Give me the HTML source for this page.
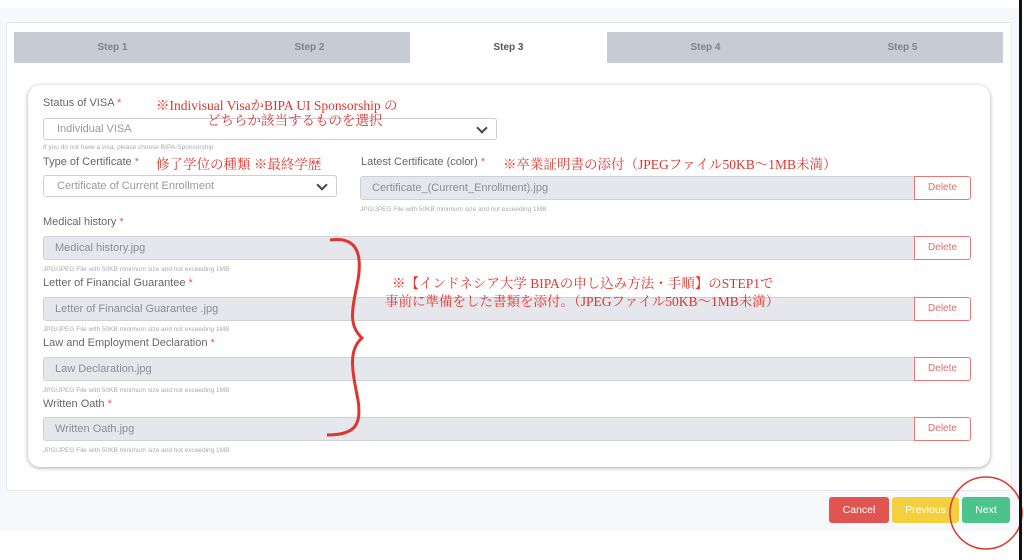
<!DOCTYPE html>
<html><head><meta charset="utf-8"><style>
*{margin:0;padding:0;box-sizing:border-box}
body{width:1024px;height:560px;background:#fff;position:relative;overflow:hidden;font-family:"Liberation Sans",sans-serif;}
.a{position:absolute}
.bg{left:0;top:8px;width:1019px;height:523px;background:#f7f8fb}
.card{left:6px;top:22px;width:1006px;height:469px;background:#fff;border:1px solid #e6e8ec;border-radius:3px}
.steps{left:14px;top:32px;width:989px;height:31px;background:#c6cbd4}
.step{position:absolute;top:0;height:31px;line-height:31px;text-align:center;font-size:10px;font-weight:bold;color:#7d828b;width:197px}
.inner{left:28px;top:85px;width:962px;height:382px;border-radius:12px;background:#fff;box-shadow:0 1px 4px rgba(0,0,0,.35)}
.lbl{font-size:11px;color:#666}
.lbl b{color:#e55;font-weight:normal}
.help{font-size:6.5px;color:#aaa}
.sel{border:1px solid #ccd;border-radius:3px;background:#fff;font-size:11px;color:#999;padding-left:13px;line-height:20px;height:22px}
.sel:after{content:"";position:absolute;right:10px;top:5px;width:6px;height:6px;border-right:2px solid #444;border-bottom:2px solid #444;transform:rotate(45deg)}
.inp{background:#e6e7ec;border:1px solid #cfd1d8;border-radius:3px 0 0 3px;font-size:11px;color:#8a8d95;padding-left:11px;line-height:22px;height:24px}
.del{width:57px;height:24px;border:1px solid #e8777a;border-radius:0 3px 3px 0;background:#fff;color:#e36b6e;font-size:10px;text-align:center;line-height:22px}
.jp{font-family:"Liberation Serif","Noto Serif CJK SC",serif;color:#e0352d;font-size:13.5px;white-space:nowrap}
.btn{top:497px;height:26px;color:#fff;font-size:10.5px;text-align:center;line-height:26px;border-radius:3px}
</style></head><body>
<div class="a bg"></div>
<div class="a card"></div>
<div class="a steps">
<div class="step" style="left:0">Step 1</div>
<div class="step" style="left:197px">Step 2</div>
<div class="step" style="left:396px;background:#fff;color:#555">Step 3</div>
<div class="step" style="left:593px">Step 4</div>
<div class="step" style="left:790px">Step 5</div>
</div>
<div class="a inner"></div>

<div class="a lbl" style="left:43px;top:97px">Status of VISA <b>*</b></div>
<div class="a sel" style="left:43px;top:118px;width:454px">Individual VISA</div>
<div class="a help" style="left:43px;top:144px">If you do not have a visa, please choose BIPA-Sponsorship</div>
<div class="a lbl" style="left:43px;top:156px">Type of Certificate <b>*</b></div>
<div class="a sel" style="left:43px;top:175px;width:294px">Certificate of Current Enrollment</div>
<div class="a lbl" style="left:361px;top:156px">Latest Certificate (color) <b>*</b></div>
<div class="a inp" style="left:360px;top:176px;width:555px">Certificate_(Current_Enrollment).jpg</div>
<div class="a del" style="left:914px;top:176px">Delete</div>
<div class="a help" style="left:360px;top:206px">JPG/JPEG File with 50KB minimum size and not exceeding 1MB</div>

<div class="a lbl" style="left:43px;top:216px">Medical history <b>*</b></div>
<div class="a inp" style="left:43px;top:236px;width:872px">Medical history.jpg</div>
<div class="a del" style="left:914px;top:236px">Delete</div>
<div class="a help" style="left:43px;top:266px">JPG/JPEG File with 50KB minimum size and not exceeding 1MB</div>

<div class="a lbl" style="left:43px;top:277px">Letter of Financial Guarantee <b>*</b></div>
<div class="a inp" style="left:43px;top:297px;width:872px">Letter of Financial Guarantee .jpg</div>
<div class="a del" style="left:914px;top:297px">Delete</div>
<div class="a help" style="left:43px;top:326px">JPG/JPEG File with 50KB minimum size and not exceeding 1MB</div>

<div class="a lbl" style="left:43px;top:337px">Law and Employment Declaration <b>*</b></div>
<div class="a inp" style="left:43px;top:357px;width:872px">Law Declaration.jpg</div>
<div class="a del" style="left:914px;top:357px">Delete</div>
<div class="a help" style="left:43px;top:387px">JPG/JPEG File with 50KB minimum size and not exceeding 1MB</div>

<div class="a lbl" style="left:43px;top:398px">Written Oath <b>*</b></div>
<div class="a inp" style="left:43px;top:417px;width:872px">Written Oath.jpg</div>
<div class="a del" style="left:914px;top:417px">Delete</div>
<div class="a help" style="left:43px;top:447px">JPG/JPEG File with 50KB minimum size and not exceeding 1MB</div>

<div class="a jp" style="left:156px;top:94px">※Indivisual VisaかBIPA UI Sponsorship の</div>
<div class="a jp" style="left:207px;top:109px">どちらか該当するものを選択</div>
<div class="a jp" style="left:156px;top:153px">修了学位の種類 ※最終学歴</div>
<div class="a jp" style="left:503px;top:153px">※卒業証明書の添付（JPEGファイル50KB〜1MB未満）</div>
<div class="a jp" style="left:392px;top:272px">※【インドネシア大学 BIPAの申し込み方法・手順】のSTEP1で</div>
<div class="a jp" style="left:385px;top:290px">事前に準備をした書類を添付。（JPEGファイル50KB〜1MB未満）</div>

<svg class="a" style="left:300px;top:230px" width="100" height="210"><path d="M30 10 C58 6 62 25 58 50 C52 80 48 95 62 108 C48 120 52 140 58 170 C62 195 55 205 27 205" fill="none" stroke="#e0352d" stroke-width="3"/></svg>

<div class="a btn" style="left:829px;width:60px;background:#e05550">Cancel</div>
<div class="a btn" style="left:892px;width:67px;background:#f4d03f">Previous</div>
<div class="a btn" style="left:962px;width:48px;background:#4cc38a">Next</div>
<svg class="a" style="left:940px;top:470px" width="84" height="90"><ellipse cx="46" cy="43" rx="36" ry="36" fill="none" stroke="#d93a32" stroke-width="1.5"/></svg>
<div class="a" style="left:1019px;top:0;width:3px;height:560px;background:#111"></div>
</body></html>
